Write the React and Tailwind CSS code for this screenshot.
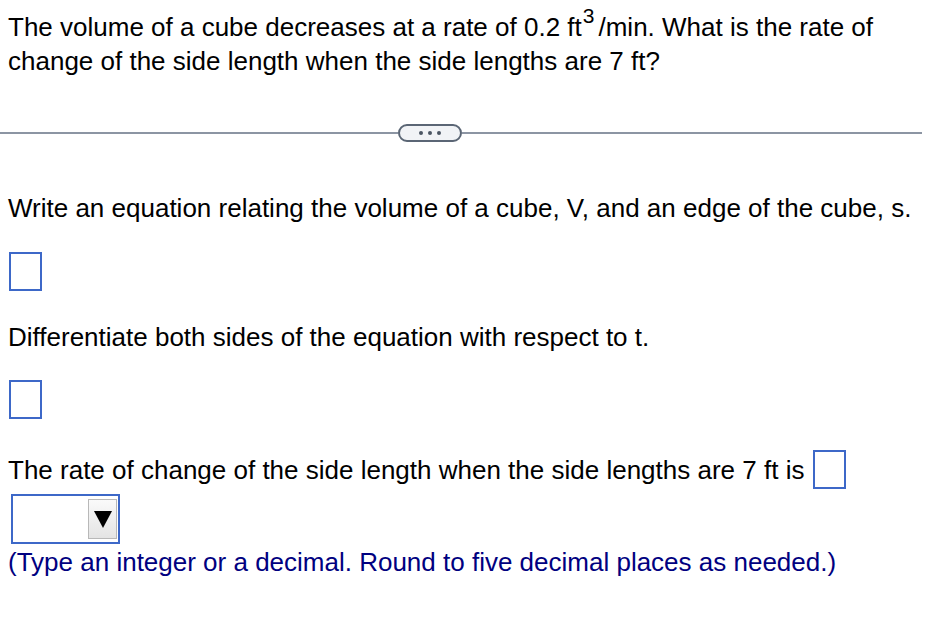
export default function App() {
  return (
    <div className="w-[932px] h-[644px] bg-white text-black font-['Liberation_Sans',Arial,sans-serif] text-[26px]">
      <div className="pl-[8px] pt-[10px] pr-2 leading-[34px]">
        The volume of a cube decreases at a rate of 0.2 ft
        <sup className="text-[21px] relative -top-[13px] ml-[1px]">3</sup>
        <span className="ml-[4px]">/</span>min. What is the rate of change of the side length when the side lengths are 7 ft?
      </div>

      <div className="flex items-center mt-[46px] w-[922px]">
        <div className="h-[2px] w-[398px] bg-[#8c95a3]" />
        <div className="flex items-center justify-center gap-[5px] w-[64px] h-[18px] rounded-full border-2 border-[#5b6675] bg-[#f1f3f6]">
          <span className="w-[4px] h-[4px] rounded-full bg-[#4b5563]" />
          <span className="w-[4px] h-[4px] rounded-full bg-[#4b5563]" />
          <span className="w-[4px] h-[4px] rounded-full bg-[#4b5563]" />
        </div>
        <div className="h-[2px] flex-1 bg-[#8c95a3]" />
      </div>

      <div className="pl-[8px] mt-[49px] leading-[34px]">
        Write an equation relating the volume of a cube, V, and an edge of the cube, s.
      </div>
      <div className="pl-[9px] mt-[27px]">
        <div className="w-[33px] h-[39px] border-2 border-[#3d68c8]" />
      </div>

      <div className="pl-[8px] mt-[29px] leading-[34px]">
        Differentiate both sides of the equation with respect to t.
      </div>
      <div className="pl-[9px] mt-[26px]">
        <div className="w-[33px] h-[39px] border-2 border-[#3d68c8]" />
      </div>

      <div className="pl-[8px] mt-[31px] flex items-center gap-[9px] leading-[34px]">
        <span>The rate of change of the side length when the side lengths are 7 ft is</span>
        <div className="w-[33px] h-[39px] border-2 border-[#3d68c8]" />
      </div>
      <div className="pl-[11px] mt-[5px]">
        <div className="w-[109px] h-[50px] border-2 border-[#3d68c8] flex items-center justify-end pr-[1px]">
          <div className="w-[29px] h-[40px] bg-gradient-to-b from-[#fafafa] to-[#e4e4e4] border border-[#b8b8b8] flex items-center justify-center">
            <svg width="20" height="20" viewBox="0 0 20 20">
              <polygon points="1,2 19,2 10,19" fill="#000" />
            </svg>
          </div>
        </div>
      </div>
      <div className="pl-[8px] mt-[1px] leading-[34px] text-[#000080]">
        (Type an integer or a decimal. Round to five decimal places as needed.)
      </div>
    </div>
  );
}
